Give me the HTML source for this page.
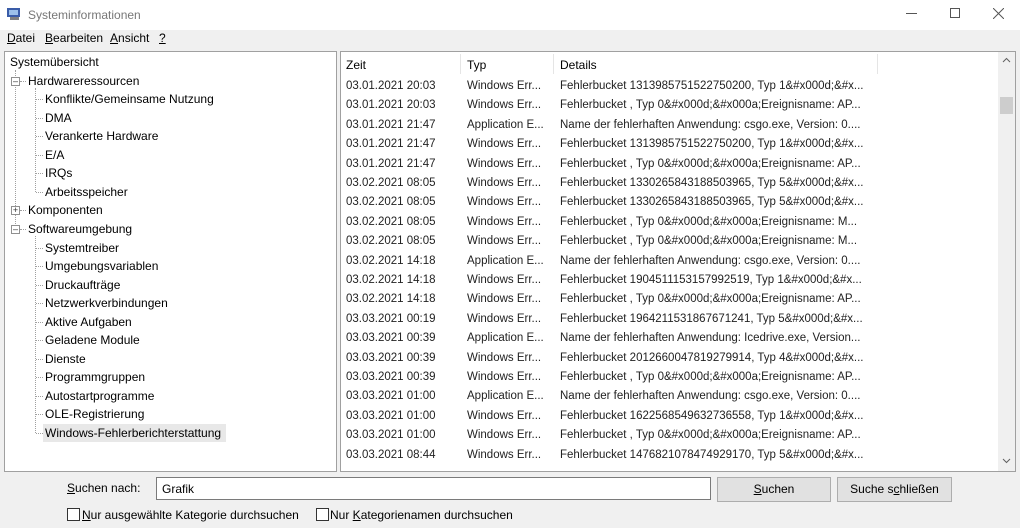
<!DOCTYPE html>
<html><head><meta charset="utf-8"><style>
*{margin:0;padding:0;box-sizing:border-box}
body{width:1020px;height:528px;background:#f0f0f0;font-family:"Liberation Sans",sans-serif;font-size:12px;color:#000;position:relative;overflow:hidden}
.a{position:absolute;white-space:nowrap}
#title{left:0;top:0;width:1020px;height:30px;background:#fff}
#menu{left:0;top:30px;width:1020px;height:18px;background:#f0f0f0}
.box{position:absolute;background:#fff;border:1px solid #a0a0a0}
.t{position:absolute;white-space:nowrap;line-height:14px}
.r{position:absolute;white-space:nowrap;color:#222;font-size:11.5px}
.pm{position:absolute;width:9px;height:9px;border:1px solid #909090;background:#fff;font-size:9px;line-height:7px;text-align:center;color:#333}
.dv{position:absolute;border-left:1px dotted #a0a0a0;width:0}
.dh{position:absolute;border-top:1px dotted #a0a0a0;height:0}
.btn{position:absolute;background:#e1e1e1;border:1px solid #adadad;text-align:center;line-height:23px}
.cb{position:absolute;width:13px;height:13px;border:1px solid #333;background:#fff}
</style></head><body>
<div id="title" class="a"></div>
<svg class="a" style="left:6px;top:6px" width="16" height="16"><rect x="1" y="2" width="13" height="9" fill="#3a5ca8"/><rect x="3" y="4" width="9" height="5" fill="#9cc0ea"/><rect x="4" y="11" width="9" height="3" fill="#808080"/></svg>
<div class="a" style="left:28px;top:8px;color:#777">Systeminformationen</div>
<div class="a" style="left:906px;top:13px;width:11px;border-top:1px solid #555"></div>
<div class="a" style="left:950px;top:8px;width:10px;height:10px;border:1px solid #555"></div>
<svg class="a" style="left:993px;top:8px" width="11" height="11"><path d="M0 0L11 11M11 0L0 11" stroke="#555" stroke-width="1"/></svg>
<div id="menu" class="a"></div>
<div class="a" style="left:7px;top:31px"><u>D</u>atei</div>
<div class="a" style="left:45px;top:31px"><u>B</u>earbeiten</div>
<div class="a" style="left:110px;top:31px"><u>A</u>nsicht</div>
<div class="a" style="left:159px;top:31px"><u>?</u></div>

<div class="box" style="left:4px;top:51px;width:333px;height:421px"></div>
<div class="t" style="left:10px;top:55px">Systemübersicht</div>
<div class="dv" style="left:15px;top:70px;height:160px"></div>
<div class="dv" style="left:35px;top:88px;height:104px"></div>
<div class="dv" style="left:35px;top:236px;height:197px"></div>
<div id="tree"></div>

<div class="box" style="left:340px;top:51px;width:676px;height:421px"></div>
<div class="a" style="left:341px;top:52px;width:657px;height:22px;background:#fff"></div>
<div class="a" style="left:460px;top:54px;height:20px;border-left:1px solid #e5e5e5"></div>
<div class="a" style="left:553px;top:54px;height:20px;border-left:1px solid #e5e5e5"></div>
<div class="a" style="left:877px;top:54px;height:20px;border-left:1px solid #e5e5e5"></div>
<div class="t" style="left:346px;top:58px">Zeit</div>
<div class="t" style="left:467px;top:58px">Typ</div>
<div class="t" style="left:560px;top:58px">Details</div>
<div class="a" style="left:998px;top:52px;width:17px;height:419px;background:#f0f0f0"></div>
<div class="a" style="left:1000px;top:97px;width:13px;height:17px;background:#cdcdcd"></div>
<svg class="a" style="left:1002px;top:57px" width="9" height="6"><path d="M1 5L4.5 1.5L8 5" stroke="#606060" fill="none"/></svg>
<svg class="a" style="left:1002px;top:458px" width="9" height="6"><path d="M1 1L4.5 4.5L8 1" stroke="#606060" fill="none"/></svg>
<div id="rows"></div>

<div class="a" style="left:67px;top:481px"><u>S</u>uchen nach:</div>
<div class="a" style="left:156px;top:477px;width:555px;height:23px;background:#fff;border:1px solid #7a7a7a;padding:4px 5px">Grafik</div>
<div class="btn" style="left:717px;top:477px;width:114px;height:25px"><u>S</u>uchen</div>
<div class="btn" style="left:837px;top:477px;width:115px;height:25px">Suche s<u>c</u>hließen</div>
<div class="cb" style="left:67px;top:508px"></div>
<div class="a" style="left:82px;top:508px"><u>N</u>ur ausgewählte Kategorie durchsuchen</div>
<div class="cb" style="left:316px;top:508px"></div>
<div class="a" style="left:330px;top:508px">Nur <u>K</u>ategorienamen durchsuchen</div>

<script>
var tree=[[1,"Hardwareressourcen","-"],[2,"Konflikte/Gemeinsame Nutzung"],[2,"DMA"],[2,"Verankerte Hardware"],[2,"E/A"],[2,"IRQs"],[2,"Arbeitsspeicher"],[1,"Komponenten","+"],[1,"Softwareumgebung","-"],[2,"Systemtreiber"],[2,"Umgebungsvariablen"],[2,"Druckaufträge"],[2,"Netzwerkverbindungen"],[2,"Aktive Aufgaben"],[2,"Geladene Module"],[2,"Dienste"],[2,"Programmgruppen"],[2,"Autostartprogramme"],[2,"OLE-Registrierung"],[2,"Windows-Fehlerberichterstattung"]];
var h="";tree.forEach(function(e,i){var y=55+(i+1)*18.55;
if(e[0]==1){h+='<div class="pm" style="left:11px;top:'+(y+3)+'px">'+(e[2]=="-"?"&#8211;":"+")+'</div><div class="dh" style="left:20px;top:'+(y+7)+'px;width:6px"></div><div class="t" style="left:28px;top:'+y+'px">'+e[1]+'</div>';}
else{h+='<div class="dh" style="left:36px;top:'+(y+7)+'px;width:7px"></div>';
if(i==19)h+='<div class="a" style="left:43px;top:'+(y-2)+'px;width:183px;height:18px;background:#e8e8e8"></div>';
h+='<div class="t" style="left:45px;top:'+y+'px">'+e[1]+'</div>';}});
document.getElementById("tree").innerHTML=h;
var W="Windows Err...",A="Application E...",
F0="Fehlerbucket , Typ 0&amp;#x000d;&amp;#x000a;Ereignisname: AP...",
rows=[["03.01.2021 20:03",W,"Fehlerbucket 1313985751522750200, Typ 1&amp;#x000d;&amp;#x..."],["03.01.2021 20:03",W,F0],["03.01.2021 21:47",A,"Name der fehlerhaften Anwendung: csgo.exe, Version: 0...."],["03.01.2021 21:47",W,"Fehlerbucket 1313985751522750200, Typ 1&amp;#x000d;&amp;#x..."],["03.01.2021 21:47",W,F0],["03.02.2021 08:05",W,"Fehlerbucket 1330265843188503965, Typ 5&amp;#x000d;&amp;#x..."],["03.02.2021 08:05",W,"Fehlerbucket 1330265843188503965, Typ 5&amp;#x000d;&amp;#x..."],["03.02.2021 08:05",W,"Fehlerbucket , Typ 0&amp;#x000d;&amp;#x000a;Ereignisname: M..."],["03.02.2021 08:05",W,"Fehlerbucket , Typ 0&amp;#x000d;&amp;#x000a;Ereignisname: M..."],["03.02.2021 14:18",A,"Name der fehlerhaften Anwendung: csgo.exe, Version: 0...."],["03.02.2021 14:18",W,"Fehlerbucket 1904511153157992519, Typ 1&amp;#x000d;&amp;#x..."],["03.02.2021 14:18",W,F0],["03.03.2021 00:19",W,"Fehlerbucket 1964211531867671241, Typ 5&amp;#x000d;&amp;#x..."],["03.03.2021 00:39",A,"Name der fehlerhaften Anwendung: Icedrive.exe, Version..."],["03.03.2021 00:39",W,"Fehlerbucket 2012660047819279914, Typ 4&amp;#x000d;&amp;#x..."],["03.03.2021 00:39",W,F0],["03.03.2021 01:00",A,"Name der fehlerhaften Anwendung: csgo.exe, Version: 0...."],["03.03.2021 01:00",W,"Fehlerbucket 1622568549632736558, Typ 1&amp;#x000d;&amp;#x..."],["03.03.2021 01:00",W,F0],["03.03.2021 08:44",W,"Fehlerbucket 1476821078474929170, Typ 5&amp;#x000d;&amp;#x..."]];
h="";rows.forEach(function(r,i){var y=80+i*19.4;h+='<div class="r" style="left:346px;top:'+y+'px">'+r[0]+'</div><div class="r" style="left:467px;top:'+y+'px">'+r[1]+'</div><div class="r" style="left:560px;top:'+y+'px">'+r[2]+'</div>';});
document.getElementById("rows").innerHTML=h;
</script>
</body></html>
